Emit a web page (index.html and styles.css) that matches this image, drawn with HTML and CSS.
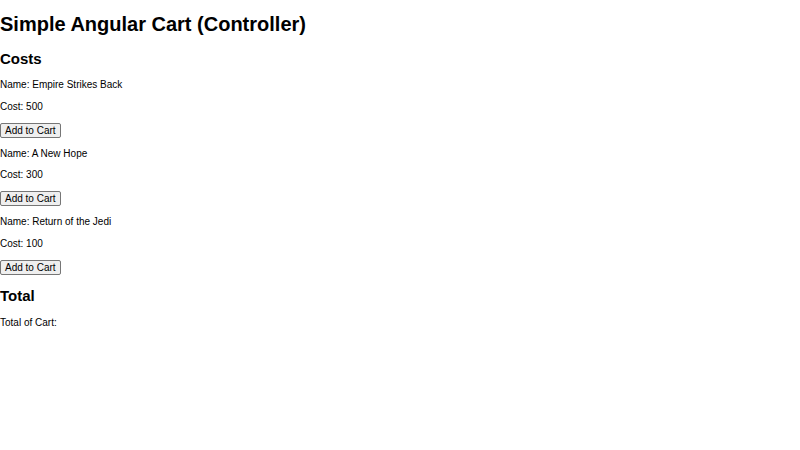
FILE: index.html
```html
<!DOCTYPE html>
<html lang="en">
<head>
  <meta charset="UTF-8">
  <meta name="viewport" content="width=device-width, initial-scale=1.0">
  <title>Simple Angular Cart (Controller)</title>
  <link rel="stylesheet" href="styles.css">
</head>
<body>

<h1>Simple Angular Cart (Controller)</h1>

<h2>Costs</h2>

<div class="item">
  <p>Name: Empire Strikes Back</p>
  <p>Cost: 500</p>
  <button class="add-btn">Add to Cart</button>
</div>

<div class="item">
  <p>Name: A New Hope</p>
  <p>Cost: 300</p>
  <button class="add-btn">Add to Cart</button>
</div>

<div class="item">
  <p>Name: Return of the Jedi</p>
  <p>Cost: 100</p>
  <button class="add-btn">Add to Cart</button>
</div>

<h2>Total</h2>

<p>Total of Cart: </p>

</body>
</html>
```

FILE: styles.css
```css
body {
  font-family: 'Liberation Sans', Arial, sans-serif;
  font-size: 10px;
  color: #000;
  background-color: #fff;
  margin: 0;
}

h1 {
  font-size: 2em;
  margin: 0.67em 0;
}

h2 {
  font-size: 1.5em;
  margin: 0.83em 0;
}

p {
  margin: 1em 0;
  line-height: 11.75px;
}

.item {
  line-height: 11px;
}

.add-btn {
  font: inherit;
  line-height: 11px;
  color: #000;
  background-color: #efefef;
  border: 1px solid #767676;
  border-radius: 2px;
  padding: 1px 4px;
  margin: 0;
  vertical-align: top;
}
```
